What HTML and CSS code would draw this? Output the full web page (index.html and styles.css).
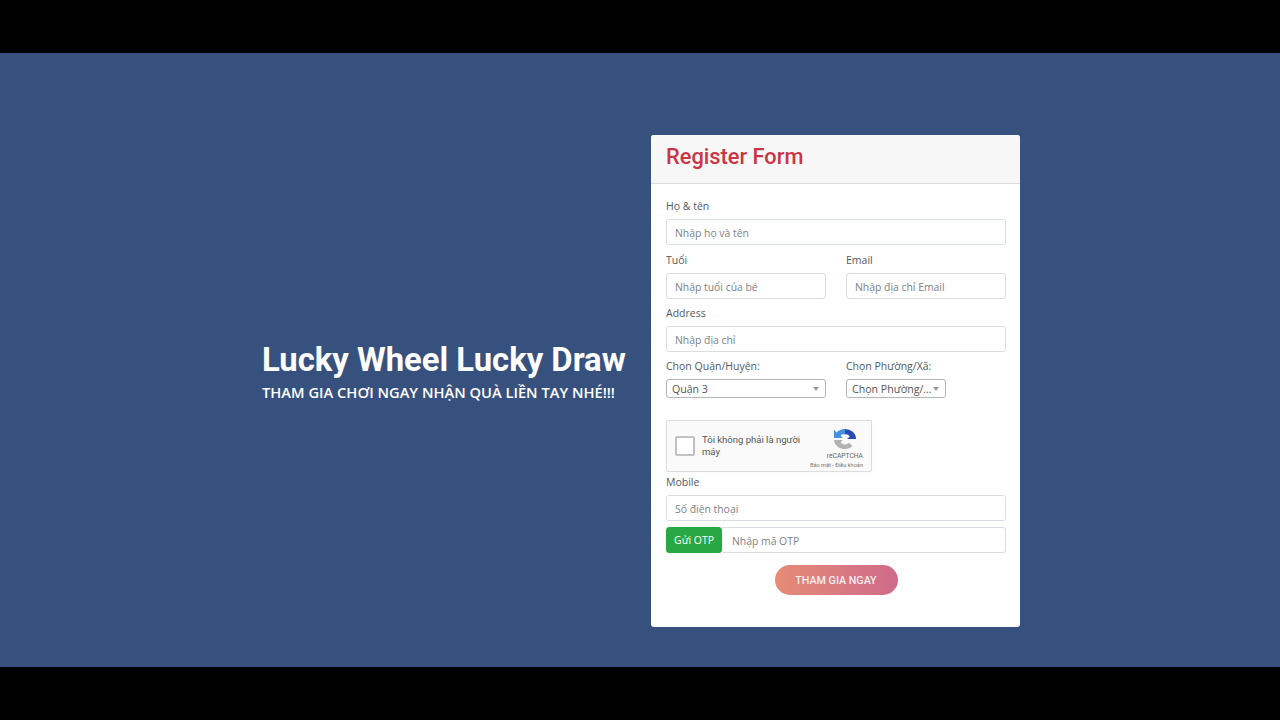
FILE: index.html
```html
<!DOCTYPE html>
<html lang="vi">
<head>
<meta charset="utf-8">
<title>Lucky Wheel Lucky Draw</title>
<link rel="stylesheet" href="styles.css">
</head>
<body>
<div class="bar"></div>
<main class="hero">
  <section class="intro">
    <h1>Lucky Wheel Lucky Draw</h1>
    <p>THAM GIA CHƠI NGAY NHẬN QUÀ LIỀN TAY NHÉ!!!</p>
  </section>
  <section class="card">
    <header class="card-head"><h2>Register Form</h2></header>
    <form class="card-body">
      <div class="group first">
        <label>Họ &amp; tên</label>
        <input class="field" placeholder="Nhập họ và tên">
      </div>
      <div class="cols">
        <div class="group">
          <label>Tuổi</label>
          <input class="field" placeholder="Nhập tuổi của bé">
        </div>
        <div class="group">
          <label>Email</label>
          <input class="field" placeholder="Nhập địa chỉ Email">
        </div>
      </div>
      <div class="group">
        <label>Address</label>
        <input class="field" placeholder="Nhập địa chỉ">
      </div>
      <div class="cols">
        <div class="group">
          <label>Chọn Quận/Huyện:</label>
          <div class="select"><span>Quận 3</span><i class="caret"></i></div>
        </div>
        <div class="group">
          <label>Chọn Phường/Xã:</label>
          <div class="select short"><span>Chọn Phường/...</span><i class="caret"></i></div>
        </div>
      </div>
      <div class="captcha">
        <div class="check"></div>
        <div class="captcha-text">Tôi không phải là người máy</div>
        <div class="captcha-brand">
          <svg class="captcha-logo" viewBox="0 0 24 24" width="24" height="22" preserveAspectRatio="none">
            <path d="M12 1 A11 11 0 0 0 3.5 5 L1 2 V11 H10 L7.5 8.5 A5 5 0 0 1 12 7 Z" fill="#4a90e2"/>
            <path d="M12 1 A11 11 0 0 1 23 12 H14 L16.8 9.2 A5 5 0 0 0 12 7 Z" fill="#2a4bb0"/>
            <path d="M1 13 H10 L7.5 15.5 A5.5 5.5 0 0 0 16 16.2 L19.5 20 A11 11 0 0 1 1 13 Z" fill="#b2b2b2"/>
          </svg>
          <div class="brand-name">reCAPTCHA</div>
          <div class="brand-links">Bảo mật - Điều khoản</div>
        </div>
      </div>
      <div class="group mobile">
        <label>Mobile</label>
        <input class="field" placeholder="Số điện thoại">
      </div>
      <div class="otp">
        <button type="button" class="otp-btn">Gửi OTP</button>
        <input class="field otp-field" placeholder="Nhập mã OTP">
      </div>
      <div class="submit-row">
        <button type="button" class="submit">THAM GIA NGAY</button>
      </div>
    </form>
  </section>
</main>
<div class="bar"></div>
</body>
</html>
```
FILE: styles.css
```css
* { box-sizing: border-box; }
html, body { height: 100%; }
body {
  margin: 0;
  display: flex;
  flex-direction: column;
  height: 720px;
  overflow: hidden;
  background: #000;
  font-family: "Open Sans", "Noto Sans", sans-serif;
  color: #55595f;
}
.bar { height: 53px; background: #000; flex: none; }
.hero {
  flex: 1;
  background: #37517e;
  display: flex;
  justify-content: center;
  align-items: flex-start;
  padding: 82px 0 0 2px;
}
.intro { width: 389px; color: #fff; margin-top: 207px; }
.intro h1 {
  margin: 0;
  font: 700 32.8px/36px Roboto, sans-serif;
}
.intro p {
  margin: 4px 0 0;
  font: 600 14.7px/20px "Open Sans", sans-serif;
}
.card {
  width: 369px;
  height: 492px;
  background: #fff;
  border-radius: 3px;
}
.card-head {
  height: 49px;
  background: #f7f7f7;
  border-bottom: 1px solid #dcdcdc;
  border-radius: 3px 3px 0 0;
  padding: 0 15px 4px;
  display: flex;
  align-items: center;
}
.card-head h2 {
  margin: 0;
  font: 500 21.8px/26px Roboto, sans-serif;
  color: #cb3545;
}
.card-body {
  padding: 14px 14px 0 15px;
  display: flex;
  flex-direction: column;
}
.group {
  display: flex;
  flex-direction: column;
  margin-bottom: 6px;
  min-width: 0;
}
.group.first { margin-bottom: 7px; }
.group label {
  font-size: 10.5px;
  line-height: 16px;
  margin-bottom: 5px;
}
.field {
  width: 100%;
  height: 26px;
  border: 1px solid #dadde1;
  border-radius: 3px;
  padding: 2px 8px 0;
  font: 10.4px "Open Sans", sans-serif;
  color: #495057;
  background: #fff;
  outline: none;
}
.field::placeholder { color: #7d8187; opacity: 1; }
.cols {
  display: grid;
  grid-template-columns: 160px 160px;
  column-gap: 20px;
}
.select {
  height: 19px;
  border: 1px solid #b4b4b4;
  border-radius: 3px;
  padding: 1px 5px 0;
  font-size: 10.6px;
  line-height: 18px;
  color: #555;
  display: flex;
  align-items: center;
  justify-content: space-between;
}
.select span { white-space: nowrap; }
.select.short { width: 100px; }
.caret {
  width: 0;
  height: 0;
  border-left: 3px solid transparent;
  border-right: 3px solid transparent;
  border-top: 4px solid #999;
  margin-right: 1px;
}
.captcha {
  width: 206px;
  height: 52px;
  margin-top: 16px;
  margin-bottom: 1px;
  background: #fafafa;
  border: 1px solid #dcdcdc;
  border-radius: 2px;
  box-shadow: 0 0 2px rgba(0,0,0,.06);
  display: flex;
  align-items: center;
  padding-left: 8px;
  font-family: Roboto, sans-serif;
}
.check {
  width: 20px;
  height: 20px;
  flex: none;
  background: #fff;
  border: 2px solid #c1c1c1;
  border-radius: 2px;
}
.captcha-text {
  width: 110px;
  margin-left: 7px;
  font-size: 9.5px;
  line-height: 12px;
  color: #555;
}
.captcha-brand {
  flex: 1;
  align-self: stretch;
  display: flex;
  flex-direction: column;
  align-items: flex-end;
  padding: 7px 8px 0 0;
  min-width: 0;
  color: #666;
}
.captcha-logo { margin-right: 6px; flex: none; }
.brand-name { font-size: 6.7px; line-height: 9px; margin-top: 2px; white-space: nowrap; }
.brand-links { font-size: 5.6px; line-height: 8px; white-space: nowrap; color: #777; }
.group.mobile { margin-bottom: 6px; margin-top: 1px; }
.otp { display: flex; height: 26px; }
.otp-btn {
  flex: none;
  width: 56px;
  height: 26px;
  border: 1px solid #28a745;
  background: #28a745;
  color: #fff;
  border-radius: 3px;
  font: 10.4px "Open Sans", sans-serif;
  padding: 0;
}
.otp-field { flex: 1; border-left: 0; border-radius: 0 3px 3px 0; padding-left: 10px; }
.submit-row { display: flex; justify-content: center; margin-top: 12px; }
.submit {
  width: 123px;
  height: 30px;
  border: 0;
  border-radius: 15px;
  background: linear-gradient(90deg, #e68c76, #cf6a8c);
  color: #fbeef0;
  font: 500 10.7px Roboto, sans-serif;
  padding: 0;
}
```
